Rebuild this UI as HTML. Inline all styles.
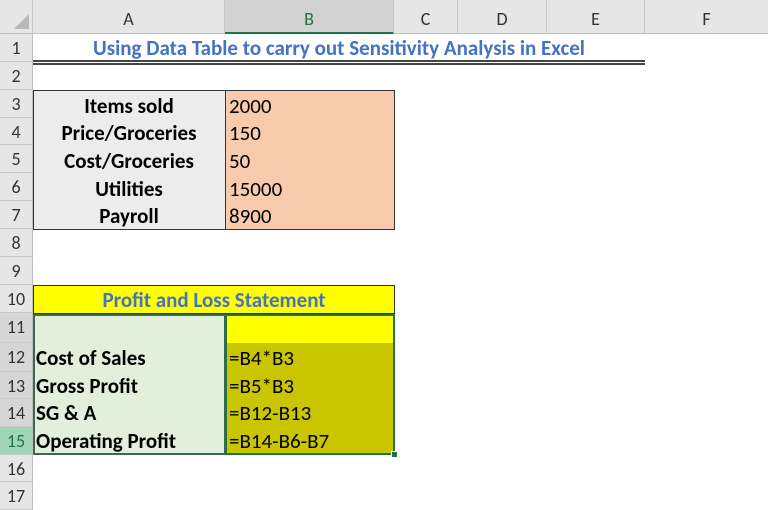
<!DOCTYPE html>
<html><head><style>
body{margin:0;width:768px;height:502px;overflow:hidden;background:#fff;font-family:Calibri,Carlito,"Liberation Sans",sans-serif;position:relative}
div{position:absolute;box-sizing:border-box}
.ch{top:0;height:34px;background:#e6e6e6;border-right:1px solid #c8c8c8;border-bottom:1px solid #c0c0c0;text-align:center;line-height:38px;font-size:18px;color:#333}
.rh{left:0;width:33px;background:#e6e6e6;border-bottom:1px solid #c8c8c8;border-right:1px solid #c0c0c0;text-align:center;font-size:18px;color:#333;line-height:28px}
.t{font-size:21px;line-height:28px;white-space:nowrap}
.b{font-weight:bold}
</style></head><body>
<div class="ch" style="left:0;width:33px"></div>
<div style="left:14px;top:14px;width:0;height:0;border-left:15px solid transparent;border-bottom:15px solid #b8b8b8"></div>
<div class="ch" style="left:33px;width:192px">A</div>
<div class="ch" style="left:225px;width:169px;background:#d2d2d2;color:#217346;border-bottom:2px solid #217346">B</div>
<div class="ch" style="left:394px;width:64px">C</div>
<div class="ch" style="left:458px;width:89px">D</div>
<div class="ch" style="left:547px;width:98px">E</div>
<div class="ch" style="left:645px;width:123px;border-right:none">F</div>

<div class="rh" style="top:34px;height:28px">1</div>
<div class="rh" style="top:62px;height:28px">2</div>
<div class="rh" style="top:90px;height:28px">3</div>
<div class="rh" style="top:118px;height:27px">4</div>
<div class="rh" style="top:145px;height:28px">5</div>
<div class="rh" style="top:173px;height:28px">6</div>
<div class="rh" style="top:201px;height:28px">7</div>
<div class="rh" style="top:229px;height:28px">8</div>
<div class="rh" style="top:257px;height:28px">9</div>
<div class="rh" style="top:285px;height:28px">10</div>
<div class="rh" style="top:313px;height:30px;background:#d6d6d6">11</div>
<div class="rh" style="top:343px;height:29px;background:#d6d6d6">12</div>
<div class="rh" style="top:372px;height:27px;background:#d6d6d6">13</div>
<div class="rh" style="top:399px;height:28px;background:#d6d6d6">14</div>
<div class="rh" style="top:427px;height:28px;background:#9fd5b7;color:#217346">15</div>
<div class="rh" style="top:455px;height:27px">16</div>
<div class="rh" style="top:482px;height:28px">17</div>

<div class="t b" style="left:33px;top:34px;width:612px;text-align:center;color:#4472c4">Using Data Table to carry out Sensitivity Analysis in Excel</div>
<div style="left:33px;top:60px;width:612px;height:5px;border-top:2px solid #444;border-bottom:2px solid #444"></div>

<div style="left:33px;top:90px;width:192px;height:140px;background:#ececec;border:1px solid #333;border-right:none"></div>
<div style="left:225px;top:90px;width:170px;height:140px;background:#f8cbad;border:1px solid #333"></div>
<div class="t b" style="left:33px;top:92px;width:192px;text-align:center">Items sold</div>
<div class="t b" style="left:33px;top:119px;width:192px;text-align:center">Price/Groceries</div>
<div class="t b" style="left:33px;top:147px;width:192px;text-align:center">Cost/Groceries</div>
<div class="t b" style="left:33px;top:175px;width:192px;text-align:center">Utilities</div>
<div class="t b" style="left:33px;top:202px;width:192px;text-align:center">Payroll</div>
<div class="t" style="left:229px;top:92px">2000</div>
<div class="t" style="left:229px;top:119px">150</div>
<div class="t" style="left:229px;top:147px">50</div>
<div class="t" style="left:229px;top:175px">15000</div>
<div class="t" style="left:229px;top:202px">8900</div>

<div style="left:33px;top:285px;width:362px;height:29px;background:#ffff00;border:1px solid #333"></div>
<div class="t b" style="left:33px;top:286px;width:362px;text-align:center;color:#4472c4">Profit and Loss Statement</div>

<div style="left:33px;top:314px;width:192px;height:141px;background:#e2efda;border:2px solid #3a6a4a;border-right:1px solid #3a6a4a"></div>
<div style="left:225px;top:314px;width:170px;height:141px;background:#c9c600;border:2px solid #217346"></div>
<div style="left:227px;top:316px;width:166px;height:27px;background:#ffff00"></div>
<div style="left:391px;top:451px;width:7px;height:7px;background:#217346;border:1px solid #fff"></div>
<div class="t b" style="left:36px;top:344px">Cost of Sales</div>
<div class="t b" style="left:36px;top:372px">Gross Profit</div>
<div class="t b" style="left:36px;top:399px">SG &amp; A</div>
<div class="t b" style="left:36px;top:427px">Operating Profit</div>
<div class="t" style="left:229px;top:344px">=B4*B3</div>
<div class="t" style="left:229px;top:372px">=B5*B3</div>
<div class="t" style="left:229px;top:399px">=B12-B13</div>
<div class="t" style="left:229px;top:427px">=B14-B6-B7</div>
</body></html>
